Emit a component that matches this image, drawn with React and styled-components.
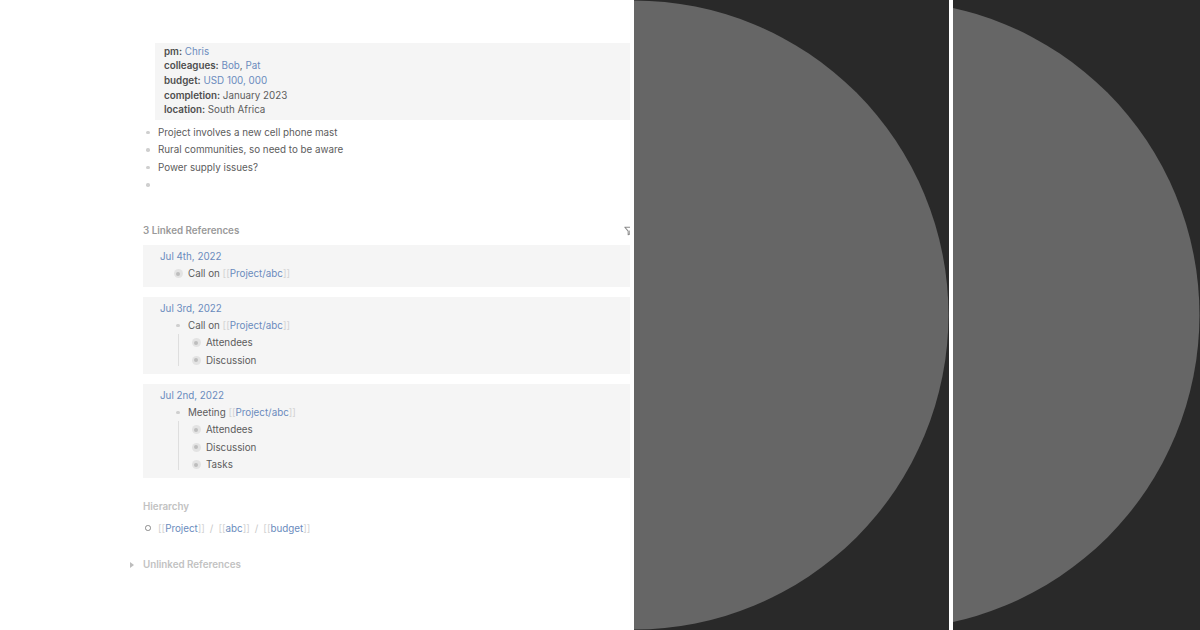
import React from "react";
import styled, { createGlobalStyle } from "styled-components";

const Global = createGlobalStyle`
  html, body { margin: 0; padding: 0; background: #fff; }
  body { font-family: Inter, "Noto Sans", sans-serif; }
`;

const Page = styled.div`
  display: flex;
  width: 1200px;
  height: 630px;
  overflow: hidden;
`;

const LeftPane = styled.div`
  width: 634px;
  flex-shrink: 0;
  background: #fff;
`;

const Content = styled.div`
  width: 630px;
  height: 630px;
  overflow: hidden;
  padding-top: 43px;
  box-sizing: border-box;
  font-size: 9.8px;
  color: #5c5c5c;
`;

const PropsBox = styled.div`
  margin-left: 155px;
  background: #f5f5f5;
  padding: 1.5px 0 1.5px 9px;
  line-height: 14.7px;
`;

const PropLine = styled.div`
  white-space: nowrap;
`;

const Key = styled.span`
  font-weight: 600;
  color: #4e4e4e;
`;

const Link = styled.span`
  color: #6a8bbd;
`;

const Bracket = styled.span`
  color: #d2d2d2;
`;

const BlockList = styled.div`
  margin-top: ${(p) => p.$mt || 0}px;
  margin-left: ${(p) => p.$ml || 0}px;
  position: relative;
`;

const Row = styled.div`
  display: flex;
  align-items: center;
  height: ${(p) => p.$h || 17.6}px;
  white-space: nowrap;
`;

const BulletBox = styled.span`
  width: 10px;
  height: 10px;
  display: flex;
  align-items: center;
  justify-content: center;
  margin-right: 5px;
  flex-shrink: 0;
`;

const Dot = styled.span`
  width: 3.5px;
  height: 3.5px;
  border-radius: 50%;
  background: #cfcfcf;
`;

const Collapsed = styled.span`
  width: 9px;
  height: 9px;
  border-radius: 50%;
  background: #e3e3e3;
  display: flex;
  align-items: center;
  justify-content: center;
  &::after {
    content: "";
    width: 4px;
    height: 4px;
    border-radius: 50%;
    background: #bdbdbd;
  }
`;

const Ring = styled.span`
  width: 3.5px;
  height: 3.5px;
  border-radius: 50%;
  border: 1px solid #8a8a8a;
`;

const Bullet = ({ kind }) => (
  <BulletBox>{kind === "collapsed" ? <Collapsed /> : kind === "ring" ? <Ring /> : <Dot />}</BulletBox>
);

const SectionHeader = styled.div`
  display: flex;
  align-items: center;
  justify-content: space-between;
  margin-top: ${(p) => p.$mt}px;
  margin-left: 143px;
  height: 16px;
  font-weight: 600;
  color: ${(p) => p.$color || "#9a9a9a"};
  white-space: nowrap;
`;

const HeaderLeft = styled.span`
  display: flex;
  align-items: center;
`;

const Arrow = styled.span`
  width: 0;
  height: 0;
  border-top: 3px solid transparent;
  border-bottom: 3px solid transparent;
  border-left: 4px solid #bdbdbd;
  margin-left: -13px;
  margin-right: 9px;
`;

const FilterIcon = styled.svg`
  margin-right: -4px;
`;

const RefBox = styled.div`
  margin-left: 143px;
  margin-top: ${(p) => p.$mt}px;
  background: #f5f5f5;
  padding: 4.5px 0 5px 17px;
`;

const DateLine = styled.div`
  color: #6a8bbd;
  height: 16px;
  line-height: 16px;
  white-space: nowrap;
`;

const Children = styled.div`
  margin-left: 18px;
  position: relative;
  &::before {
    content: "";
    position: absolute;
    left: -13px;
    top: 0;
    bottom: 3px;
    width: 1px;
    background: #dedede;
  }
`;

const Sep = styled.span`
  color: #c8c8c8;
  margin: 0 5px;
`;

const Ref = ({ name }) => (
  <>
    <Bracket>[[</Bracket>
    <Link>{name}</Link>
    <Bracket>]]</Bracket>
  </>
);

const DarkPanel = styled.div`
  width: ${(p) => p.$w}px;
  flex-shrink: 0;
  height: 630px;
  background: #292929;
  display: flex;
  justify-content: flex-end;
  overflow: hidden;
`;

const Gap = styled.div`
  width: 4px;
  flex-shrink: 0;
  background: #fff;
`;

const Disc = styled.svg`
  flex-shrink: 0;
  display: block;
`;

const Circle = () => (
  <Disc width="630" height="630" viewBox="0 0 630 630">
    <circle cx="315" cy="315" r="314.5" fill="#666" />
  </Disc>
);

export default function App() {
  return (
    <Page>
      <Global />
      <LeftPane>
        <Content>
          <PropsBox>
            <PropLine><Key>pm:</Key> <Link>Chris</Link></PropLine>
            <PropLine><Key>colleagues:</Key> <Link>Bob</Link>, <Link>Pat</Link></PropLine>
            <PropLine><Key>budget:</Key> <Link>USD 100, 000</Link></PropLine>
            <PropLine><Key>completion:</Key> January 2023</PropLine>
            <PropLine><Key>location:</Key> South Africa</PropLine>
          </PropsBox>

          <BlockList $mt={4} $ml={143}>
            <Row><Bullet />Project involves a new cell phone mast</Row>
            <Row><Bullet />Rural communities, so need to be aware</Row>
            <Row><Bullet />Power supply issues?</Row>
            <Row><Bullet /></Row>
          </BlockList>

          <SectionHeader $mt={29}>
            <HeaderLeft>3 Linked References</HeaderLeft>
            <FilterIcon width="10" height="10" viewBox="0 0 24 24" fill="none" stroke="#8a8a8a" strokeWidth="2.5" strokeLinecap="round" strokeLinejoin="round">
              <path d="M2 3h20l-8 9.5V19l-4 2v-8.5z" />
            </FilterIcon>
          </SectionHeader>

          <RefBox $mt={6}>
            <DateLine>Jul 4th, 2022</DateLine>
            <BlockList $ml={13}>
              <Row $h={16.5}><Bullet kind="collapsed" />Call on&nbsp;<Ref name="Project/abc" /></Row>
            </BlockList>
          </RefBox>

          <RefBox $mt={10}>
            <DateLine>Jul 3rd, 2022</DateLine>
            <BlockList $ml={13}>
              <Row $h={16.5}><Bullet />Call on&nbsp;<Ref name="Project/abc" /></Row>
              <Children>
                <Row $h={17.5}><Bullet kind="collapsed" />Attendees</Row>
                <Row $h={17.5}><Bullet kind="collapsed" />Discussion</Row>
              </Children>
            </BlockList>
          </RefBox>

          <RefBox $mt={10}>
            <DateLine>Jul 2nd, 2022</DateLine>
            <BlockList $ml={13}>
              <Row $h={16.5}><Bullet />Meeting&nbsp;<Ref name="Project/abc" /></Row>
              <Children>
                <Row $h={17.5}><Bullet kind="collapsed" />Attendees</Row>
                <Row $h={17.5}><Bullet kind="collapsed" />Discussion</Row>
                <Row $h={17.5}><Bullet kind="collapsed" />Tasks</Row>
              </Children>
            </BlockList>
          </RefBox>

          <SectionHeader $mt={20} $color="#c2c2c2">
            <HeaderLeft>Hierarchy</HeaderLeft>
          </SectionHeader>

          <BlockList $mt={5} $ml={143}>
            <Row>
              <BulletBox><Ring /></BulletBox>
              <Ref name="Project" /><Sep>/</Sep><Ref name="abc" /><Sep>/</Sep><Ref name="budget" />
            </Row>
          </BlockList>

          <SectionHeader $mt={20} $color="#c2c2c2">
            <HeaderLeft><Arrow />Unlinked References</HeaderLeft>
          </SectionHeader>
        </Content>
      </LeftPane>
      <DarkPanel $w={315}><Circle /></DarkPanel>
      <Gap />
      <DarkPanel $w={247}><Circle /></DarkPanel>
    </Page>
  );
}
